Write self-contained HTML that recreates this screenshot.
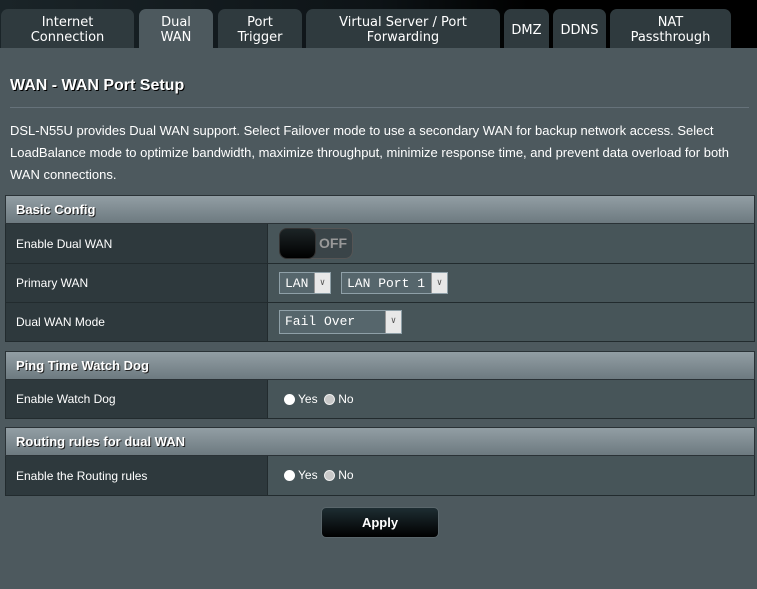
<!DOCTYPE html>
<html><head><style>
*{margin:0;padding:0;box-sizing:border-box}
body{width:757px;height:589px;overflow:hidden;background:#4d595e;font-family:"Liberation Sans",Arial,sans-serif;color:#fff;position:relative}
.top{position:absolute;left:0;top:0;width:757px;height:48px;background:linear-gradient(90deg,#1a2428 0%,#0d1316 50%,#000 70%,#000 100%)}
.tab{position:absolute;top:9px;height:39px;padding-top:3px;background:#2f3a3e;border-radius:7px 7px 0 0;font-family:"DejaVu Sans","Liberation Sans",sans-serif;font-size:13px;line-height:15px;text-align:center;display:flex;align-items:center;justify-content:center;color:#fff}
.tab.act{background:#4d595e}
.title{position:absolute;left:10px;top:77px;font-size:16px;font-weight:bold;text-shadow:1px 1px 0 #000}
.line{position:absolute;left:10px;top:107px;width:739px;height:1px;background:#2b3438;border-bottom:1px solid #66727a}
.desc{position:absolute;left:10px;top:120px;width:740px;font-size:13px;line-height:22px}
.hdr{position:absolute;left:5px;width:750px;height:29px;background:linear-gradient(#929ea4,#6d7a80);border:1px solid #2a3236;font-size:13px;font-weight:bold;padding:6px 0 0 10px;text-shadow:1px 1px 0 #222}
.row{position:absolute;left:5px;width:750px;border:1px solid #222b2e;border-top:none;background:#475559;font-size:12px}
.row .l{position:absolute;left:0;top:0;bottom:0;width:262px;background:#2e393d;border-right:1px solid #222b2e;padding-left:10px;display:flex;align-items:center}
.sel{position:absolute;height:22px;background:#56666c;border:1px solid #8fa0a8;font-family:"Liberation Mono",monospace;font-size:13px;padding:3px 0 0 5px;color:#fff}
.sel i{position:absolute;right:0;top:0;width:16px;height:20px;background:#e8e8e8;border-left:1px solid #999;font-style:normal;color:#555;font-size:9px;text-align:center;line-height:20px}
.radio{position:absolute;font-size:12px;display:flex;align-items:center}
.dot{display:inline-block;width:11px;height:11px;border-radius:50%;background:#fff;margin-right:3px}
.dot.g{background:#c8c8c8;border:1px solid #eee}
</style></head><body>
<div class="top"></div>
<div class="tab" style="left:1px;width:133px">Internet<br>Connection</div>
<div class="tab act" style="left:139px;width:74px">Dual<br>WAN</div>
<div class="tab" style="left:218px;width:84px">Port<br>Trigger</div>
<div class="tab" style="left:306px;width:194px">Virtual Server / Port<br>Forwarding</div>
<div class="tab" style="left:504px;width:45px">DMZ</div>
<div class="tab" style="left:553px;width:53px">DDNS</div>
<div class="tab" style="left:610px;width:121px">NAT<br>Passthrough</div>
<div class="title">WAN - WAN Port Setup</div>
<div class="line"></div>
<div class="desc">DSL-N55U provides Dual WAN support. Select Failover mode to use a secondary WAN for backup network access. Select LoadBalance mode to optimize bandwidth, maximize throughput, minimize response time, and prevent data overload for both WAN connections.</div>

<div class="hdr" style="top:195px">Basic Config</div>
<div class="row" style="top:224px;height:40px"><div class="l">Enable Dual WAN</div>
 <div style="position:absolute;left:273px;top:4px;width:74px;height:31px;border-radius:8px;background:#3a4448;border:1px solid #555"></div>
 <div style="position:absolute;left:273px;top:4px;width:37px;height:31px;border-radius:8px;background:linear-gradient(#1c2426,#000);border:1px solid #333"></div>
 <div style="position:absolute;left:313px;top:11px;color:#999;font-size:14px;font-weight:bold">OFF</div>
</div>
<div class="row" style="top:264px;height:39px"><div class="l">Primary WAN</div>
 <div class="sel" style="left:273px;top:8px;width:52px">LAN<i>&#8744;</i></div>
 <div class="sel" style="left:335px;top:8px;width:107px">LAN Port 1<i>&#8744;</i></div>
</div>
<div class="row" style="top:303px;height:39px"><div class="l">Dual WAN Mode</div>
 <div class="sel" style="left:273px;top:7px;width:123px;height:24px">Fail Over<i style="height:22px">&#8744;</i></div>
</div>

<div class="hdr" style="top:351px">Ping Time Watch Dog</div>
<div class="row" style="top:380px;height:39px"><div class="l">Enable Watch Dog</div>
 <div class="radio" style="left:278px;top:12px"><span class="dot"></span>Yes&nbsp;&nbsp;<span class="dot g"></span>No</div>
</div>

<div class="hdr" style="top:427px">Routing rules for dual WAN</div>
<div class="row" style="top:456px;height:40px"><div class="l">Enable the Routing rules</div>
 <div class="radio" style="left:278px;top:12px"><span class="dot"></span>Yes&nbsp;&nbsp;<span class="dot g"></span>No</div>
</div>

<div style="position:absolute;left:321px;top:507px;width:118px;height:31px;border-radius:5px;background:linear-gradient(#1e2d32,#000);border:1px solid #5a666b;text-align:center;font-size:13px;font-weight:bold;line-height:29px">Apply</div>
</body></html>
